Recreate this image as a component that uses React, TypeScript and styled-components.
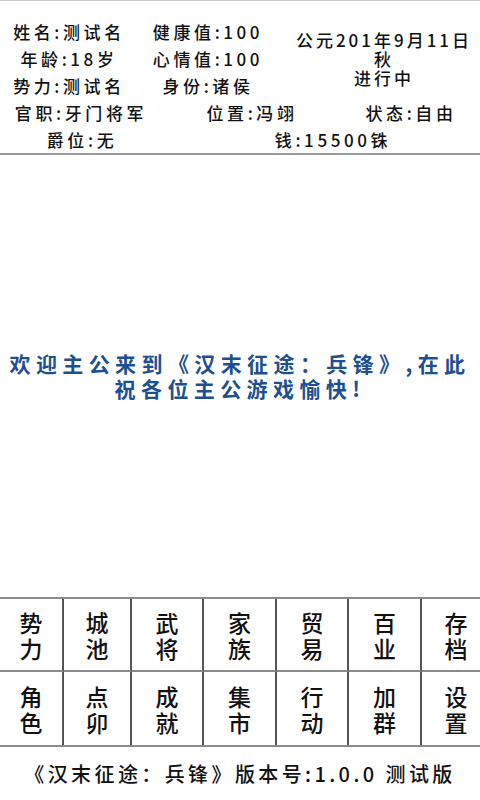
import React from 'react';
import styled, { createGlobalStyle } from 'styled-components';

const GlobalStyle = createGlobalStyle`
  * { box-sizing: border-box; }
  html, body { margin: 0; padding: 0; background: #fff; }
  body { font-family: "Noto Sans CJK SC", "Noto Sans", sans-serif; color: #111; }
`;

const stats = [
  ['姓名:测试名', '健康值:100'],
  ['年龄:18岁', '心情值:100'],
  ['势力:测试名', '身份:诸侯'],
];

const menu = [
  ['势力', '城池', '武将', '家族', '贸易', '百业', '存档'],
  ['角色', '点卯', '成就', '集市', '行动', '加群', '设置'],
];

export default function App() {
  return (
    <Page>
      <GlobalStyle />
      <Header>
        <TopBlock>
          <StatCol>
            {stats.map(r => <Stat key={r[0]}>{r[0]}</Stat>)}
          </StatCol>
          <StatCol>
            {stats.map(r => <Stat key={r[1]}>{r[1]}</Stat>)}
          </StatCol>
          <DateBlock>
            <DateLine>公元201年9月11日</DateLine>
            <DateLine>秋</DateLine>
            <DateLine>进行中</DateLine>
          </DateBlock>
        </TopBlock>
        <InfoRow $cols="162px 180px 1fr">
          <Stat>官职:牙门将军</Stat>
          <Stat>位置:冯翊</Stat>
          <Stat>状态:自由</Stat>
        </InfoRow>
        <InfoRow $cols="164px 1fr">
          <Stat>爵位:无</Stat>
          <Stat $shift={22}>钱:15500铢</Stat>
        </InfoRow>
      </Header>

      <Main>
        <Welcome>
          <WelcomeLine>欢迎主公来到《汉末征途：兵锋》,在此</WelcomeLine>
          <WelcomeLine>祝各位主公游戏愉快!</WelcomeLine>
        </Welcome>
      </Main>

      <Menu>
        {menu.map((row, ri) =>
          row.map((label, ci) => (
            <MenuButton key={label} $top={ri === 0} $last={ci === row.length - 1}>
              <MenuChar>{label[0]}</MenuChar>
              <MenuChar>{label[1]}</MenuChar>
            </MenuButton>
          ))
        )}
      </Menu>

      <Footer>《汉末征途：兵锋》版本号:1.0.0 测试版</Footer>
    </Page>
  );
}

const Page = styled.div`
  width: 480px;
  height: 800px;
  display: flex;
  flex-direction: column;
  background: #fff;
  overflow: hidden;
`;

const Header = styled.header`
  flex: none;
  border-top: 1px solid #c8c8c8;
  border-bottom: 2px solid #999;
  padding: 17px 0 0;
  height: 155px;
`;

const TopBlock = styled.div`
  display: grid;
  grid-template-columns: 138px 140px 1fr;
  align-items: center;
`;

const StatCol = styled.div`
  display: flex;
  flex-direction: column;
`;

const Stat = styled.div<{ $shift?: number }>`
  font-size: 17px;
  font-weight: 500;
  letter-spacing: 3.6px;
  line-height: 27px;
  text-align: center;
  white-space: nowrap;
  padding-left: ${p => p.$shift ?? 0}px;
`;

const DateBlock = styled.div`
  display: flex;
  flex-direction: column;
  align-items: center;
  padding-left: 10px;
`;

const DateLine = styled.div`
  font-size: 17px;
  font-weight: 500;
  letter-spacing: 3px;
  line-height: 19px;
  white-space: nowrap;
`;

const InfoRow = styled.div<{ $cols: string }>`
  display: grid;
  grid-template-columns: ${p => p.$cols};
`;

const Main = styled.main`
  flex: 1;
  display: flex;
  align-items: center;
  justify-content: center;
`;

const Welcome = styled.div`
  display: flex;
  flex-direction: column;
  align-items: center;
  color: #1d4f91;
`;

const WelcomeLine = styled.p`
  margin: 0;
  font-size: 21px;
  font-weight: 700;
  letter-spacing: 5.4px;
  line-height: 25px;
  white-space: nowrap;
`;

const Menu = styled.nav`
  flex: none;
  display: grid;
  grid-template-columns: 64px 68px 72px 73px 72px 73px 1fr;
  grid-auto-rows: 73px;
  border-top: 2px solid #8a8a8a;
  border-bottom: 2px solid #8a8a8a;
`;

const MenuButton = styled.button<{ $top: boolean; $last: boolean }>`
  display: flex;
  flex-direction: column;
  align-items: center;
  justify-content: center;
  margin: 0;
  padding: 0 0 0 ${p => (p.$last ? 10 : 0)}px;
  background: #fff;
  border: none;
  border-right: ${p => (p.$last ? 'none' : '2px solid #555')};
  border-bottom: ${p => (p.$top ? '2px solid #8a8a8a' : 'none')};
  font-family: inherit;
  color: #111;
`;

const MenuChar = styled.span`
  font-size: 23px;
  font-weight: 500;
  line-height: 26px;
`;

const Footer = styled.footer`
  flex: none;
  height: 53px;
  display: flex;
  align-items: center;
  justify-content: center;
  font-size: 20px;
  font-weight: 500;
  letter-spacing: 3.4px;
  white-space: nowrap;
`;
